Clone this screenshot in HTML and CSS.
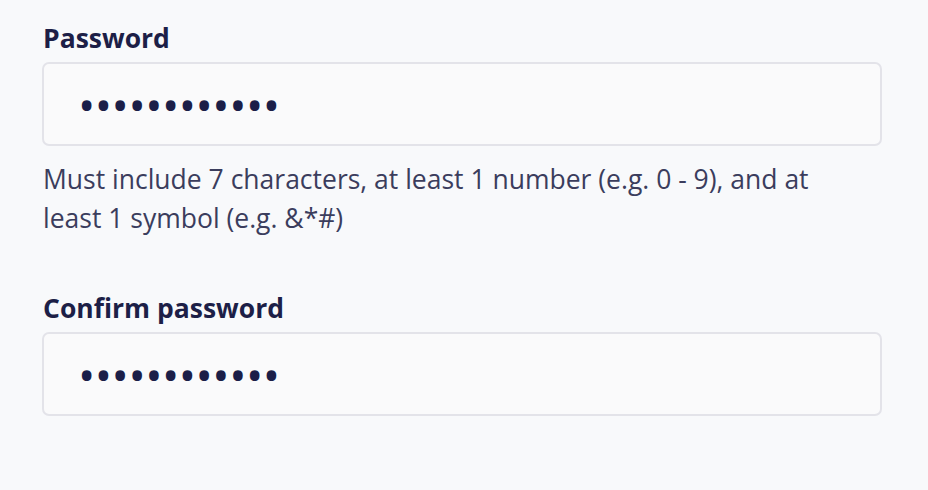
FILE: index.html
```html
<!DOCTYPE html>
<html>
<head>
<meta charset="utf-8">
<link rel="stylesheet" href="styles.css">
</head>
<body>
<form class="form">
  <div class="field">
    <label class="label" for="pw">Password</label>
    <input class="input" id="pw" type="password" value="abcdefghijkl">
    <p class="hint">Must include 7 characters, at least 1 number (e.g. 0 - 9), and at least 1 symbol (e.g. &amp;*#)</p>
  </div>
  <div class="field">
    <label class="label" for="cpw">Confirm password</label>
    <input class="input" id="cpw" type="password" value="abcdefghijkl">
  </div>
</form>
</body>
</html>
```

FILE: styles.css
```css
html, body {
  margin: 0;
  background: #f8f9fb;
}
body {
  font-family: "Open Sans", "Liberation Sans", sans-serif;
  color: #1d1f47;
}
.form {
  width: 840px;
  padding: 20px 0 0 42px;
  display: flex;
  flex-direction: column;
  gap: 52px;
}
.field {
  display: flex;
  flex-direction: column;
}
.label {
  font-size: 26.5px;
  font-weight: 700;
  line-height: 36px;
  margin-bottom: 6px;
  padding-left: 1px;
}
.input {
  box-sizing: border-box;
  width: 840px;
  height: 84px;
  border: 2px solid #e3e3e9;
  border-radius: 7px;
  background: #fafafb;
  padding: 0 34px;
  font-family: "Open Sans", sans-serif;
  font-size: 46px;
  color: #1b1e48;
  letter-spacing: -0.5px;
  outline: none;
}
.hint {
  margin: 14px 0 0 1px;
  width: 800px;
  font-size: 26.5px;
  line-height: 39px;
  color: #3b3d5d;
}
```
